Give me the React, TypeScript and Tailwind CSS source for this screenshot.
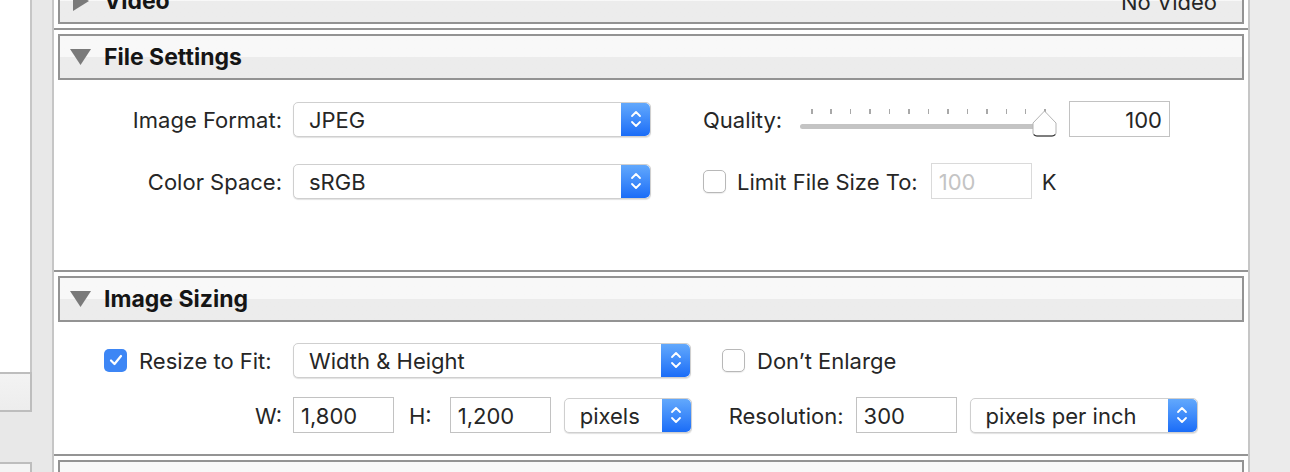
import React from "react";

const font = { fontFamily: "Inter, 'Noto Sans', sans-serif" };

const Stepper = () => (
  <div className="flex h-full w-[29px] items-center justify-center rounded-r-[5px] bg-gradient-to-b from-[#62a8fc] to-[#1a6cf7]">
    <svg width="14" height="22" viewBox="0 0 14 22" fill="none">
      <path d="M3 8 L7 4 L11 8" stroke="white" strokeWidth="1.8" strokeLinecap="round" strokeLinejoin="round" />
      <path d="M3 14 L7 18 L11 14" stroke="white" strokeWidth="1.8" strokeLinecap="round" strokeLinejoin="round" />
    </svg>
  </div>
);

const Select = ({ value, width }: { value: string; width: string }) => (
  <div
    className={`flex h-[35px] ${width} items-center rounded-[5px] border border-[#cfcfcf] bg-white shadow-[0_1px_1px_rgba(0,0,0,0.12)]`}
  >
    <span className="flex-1 pl-[15px] pt-[3px] text-[22px] text-[#262626]">{value}</span>
    <Stepper />
  </div>
);

const Field = ({ value, align = "left", disabled = false }: { value: string; align?: "left" | "right"; disabled?: boolean }) => (
  <div
    className={`flex h-[36px] w-[101px] items-center border px-[7px] pt-[3px] text-[22px] ${
      disabled ? "border-[#dadada] text-[#c4c4c4]" : "border-[#c2c2c2] text-[#262626]"
    } ${align === "right" ? "justify-end" : "justify-start"}`}
  >
    {value}
  </div>
);

const Checkbox = ({ checked = false }: { checked?: boolean }) =>
  checked ? (
    <div className="flex h-[23px] w-[23px] items-center justify-center rounded-[5px] bg-[#3d86f5]">
      <svg width="14" height="12" viewBox="0 0 14 12" fill="none">
        <path d="M2 6.5 L5.5 10 L12 2" stroke="white" strokeWidth="2.2" strokeLinecap="round" strokeLinejoin="round" />
      </svg>
    </div>
  ) : (
    <div className="h-[23px] w-[23px] rounded-[5px] border border-[#b8b8b8] bg-white shadow-[0_1px_1px_rgba(0,0,0,0.08)]" />
  );

const Header = ({ title, open = true, right }: { title: string; open?: boolean; right?: string }) => (
  <div className="flex h-[46px] flex-col border-2 border-[#939393]">
    <div className="relative flex flex-1 items-center bg-gradient-to-b from-[#f8f8f8] from-50% to-[#ececec] to-50% pl-[10px] pr-[25px]">
      <div className="flex w-[21px] justify-center">
        {open ? (
          <svg width="21" height="16" viewBox="0 0 21 16">
            <path d="M0 0 H21 L10.5 16 Z" fill="#7a7a7a" />
          </svg>
        ) : (
          <svg width="16" height="20" viewBox="0 0 16 20">
            <path d="M0 0 L16 10 L0 20 Z" fill="#7a7a7a" />
          </svg>
        )}
      </div>
      <span className="ml-[13px] flex-1 pt-[1px] text-[23px] font-bold text-[#151515]">{title}</span>
      {right && <span className="pt-[3px] text-[22px] text-[#262626]">{right}</span>}
    </div>
  </div>
);

const Label = ({ children, className = "" }: { children: React.ReactNode; className?: string }) => (
  <span className={`pt-[3px] text-[22px] text-[#262626] ${className}`}>{children}</span>
);

const Slider = () => (
  <div className="relative h-[28px] w-[257px]">
    <div className="absolute left-[11px] right-[11px] top-0 flex justify-between">
      {Array.from({ length: 13 }).map((_, i) => (
        <div key={i} className="h-[5px] w-[1.5px] bg-[#a8a8a8]" />
      ))}
    </div>
    <div className="absolute left-0 right-[10px] top-[15px] h-[5px] rounded-full bg-[#c4c4c4]" />
    <svg className="absolute right-0 top-[1px]" width="25" height="27" viewBox="0 0 25 27">
      <path d="M1 13 L12.5 1 L24 13 V23 Q24 26 21 26 H4 Q1 26 1 23 Z" fill="white" stroke="#b4b4b4" strokeWidth="1" />
      <path d="M2 24.5 Q3 26 5 26 H20 Q22 26 23 24.5" fill="none" stroke="#222" strokeWidth="1.2" />
    </svg>
  </div>
);

const Section = ({ children, first = false }: { children: React.ReactNode; first?: boolean }) => (
  <div className={`${first ? "-mt-[22px]" : "border-t-2 border-[#949494] pt-[4px]"} px-[4px]`}>{children}</div>
);

export default function App() {
  return (
    <div className="flex h-[472px] w-[1290px] overflow-hidden bg-white" style={font}>
      {/* left strip */}
      <div className="flex w-[32px] flex-col">
        <div className="h-[372px] border-r-2 border-[#c6c6c6] bg-white" />
        <div className="h-[40px] border-y-2 border-r-2 border-[#bdbdbd] bg-gradient-to-b from-[#f3f3f3] to-[#ededed]" />
        <div className="h-[50px] bg-[#e8e8e8]" />
        <div className="flex-1 border-t-2 border-r-2 border-[#bdbdbd] bg-[#f4f4f4]" />
      </div>
      <div className="w-[20px] bg-[#e8e8e8]" />

      {/* main panel */}
      <div className="flex w-[1198px] flex-col border-x-2 border-[#c6c6c6] bg-white">
        <Section first>
          <Header title="Video" open={false} right="No Video" />
          <div className="h-[4px]" />
        </Section>

        <Section>
          <Header title="File Settings" />
          <div className="flex h-[190px] flex-col gap-[26px] pt-[21px]">
            <div className="flex h-[36px] items-center">
              <Label className="w-[224px] text-right">Image Format:</Label>
              <div className="ml-[11px]">
                <Select value="JPEG" width="w-[358px]" />
              </div>
              <Label className="ml-[52px] w-[97px]">Quality:</Label>
              <div className="mt-[8px] self-start">
                <Slider />
              </div>
              <div className="ml-[12px]">
                <Field value="100" align="right" />
              </div>
            </div>
            <div className="flex h-[36px] items-center">
              <Label className="w-[224px] text-right">Color Space:</Label>
              <div className="ml-[11px]">
                <Select value="sRGB" width="w-[358px]" />
              </div>
              <div className="ml-[52px]">
                <Checkbox />
              </div>
              <Label className="ml-[11px]">Limit File Size To:</Label>
              <div className="ml-[13px]">
                <Field value="100" disabled />
              </div>
              <Label className="ml-[10px]">K</Label>
            </div>
          </div>
        </Section>

        <Section>
          <Header title="Image Sizing" />
          <div className="flex h-[132px] flex-col gap-[19px] pt-[20px]">
            <div className="flex h-[36px] items-center">
              <div className="flex w-[235px] items-center pl-[46px]">
                <Checkbox checked />
                <Label className="ml-[12px]">Resize to Fit:</Label>
              </div>
              <Select value="Width & Height" width="w-[398px]" />
              <div className="ml-[31px]">
                <Checkbox />
              </div>
              <Label className="ml-[12px]">Don’t Enlarge</Label>
            </div>
            <div className="flex h-[36px] items-center">
              <Label className="w-[224px] text-right">W:</Label>
              <div className="ml-[11px]">
                <Field value="1,800" />
              </div>
              <Label className="ml-[15px]">H:</Label>
              <div className="ml-[18px]">
                <Field value="1,200" />
              </div>
              <div className="ml-[13px]">
                <Select value="pixels" width="w-[128px]" />
              </div>
              <Label className="ml-[37px]">Resolution:</Label>
              <div className="ml-[12px]">
                <Field value="300" />
              </div>
              <div className="ml-[13px]">
                <Select value="pixels per inch" width="w-[228px]" />
              </div>
            </div>
          </div>
        </Section>

        <Section>
          <Header title="" />
        </Section>
      </div>

      <div className="flex-1 bg-[#ebebeb]" />
    </div>
  );
}
